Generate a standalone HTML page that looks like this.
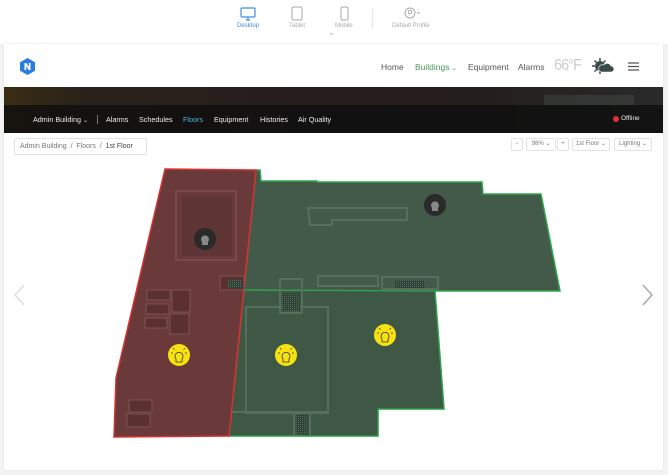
<!DOCTYPE html>
<html><head><meta charset="utf-8">
<style>
*{margin:0;padding:0;box-sizing:border-box}
body{width:668px;height:475px;background:#f3f3f3;font-family:"Liberation Sans",sans-serif;position:relative;overflow:hidden}
.top{position:absolute;top:0;left:0;width:668px;height:44px;background:#fff}
.dev{position:absolute;top:23px;font-size:6px;color:#aaa;text-align:center}
.card{position:absolute;left:4px;top:44px;width:659px;height:426px;background:#fff;box-shadow:0 0 2px #ddd}
.hdr a{position:absolute;top:62px;font-size:8.5px;color:#555}
.banner{position:absolute;left:4px;top:87px;width:659px;height:46px;background:linear-gradient(90deg,#3a2d14 0,#2a221a 12%,#271e1c 40%,#231d1c 70%,#2a2a2a 100%)}
.banner .b2{position:absolute;left:0;top:18px;width:100%;height:28px;background:rgba(15,15,15,.82)}
.nav{position:absolute;top:115px;font-size:7.2px;color:#eee}
.bc{position:absolute;left:14px;top:138px;width:133px;height:17px;border:1px solid #e2e2e2;border-radius:2px;font-size:7px;color:#777;padding:4px 5px;white-space:nowrap}
.ctl{position:absolute;top:138px;height:13px;border:1px solid #e2e2e2;border-radius:2px;font-size:6px;color:#777;text-align:center;line-height:11px}
</style></head><body>
<div class="top">
 <svg style="position:absolute;left:240px;top:7px" width="16" height="14" viewBox="0 0 16 14"><rect x="1" y="1" width="14" height="9" rx="1" fill="none" stroke="#3d8fe0" stroke-width="1.2"/><path d="M6 13h4M8 10v3" stroke="#3d8fe0" stroke-width="1.2"/></svg>
 <div class="dev" style="left:237px;color:#3d8fe0">Desktop</div>
 <svg style="position:absolute;left:291px;top:6px" width="12" height="15"><rect x="1" y="1" width="10" height="13" rx="1.5" fill="none" stroke="#aaa"/></svg>
 <div class="dev" style="left:289px">Tablet</div>
 <svg style="position:absolute;left:340px;top:6px" width="9" height="15"><rect x="1" y="1" width="7" height="13" rx="1.5" fill="none" stroke="#aaa"/></svg>
 <div class="dev" style="left:335px">Mobile</div>
 <div style="position:absolute;left:372px;top:9px;width:1px;height:20px;background:#e5e5e5"></div>
 <svg style="position:absolute;left:404px;top:7px" width="17" height="12"><circle cx="6" cy="6" r="5" fill="none" stroke="#aaa"/><circle cx="6" cy="5" r="1.8" fill="none" stroke="#aaa"/><path d="M13 5l1.5 1.5L16 5" fill="none" stroke="#aaa" stroke-width=".8"/></svg>
 <div class="dev" style="left:392px">Default Profile</div>
 <div style="position:absolute;left:330px;top:33px;font-size:6px;color:#999">^</div>
</div>
<div class="card"></div>
<svg style="position:absolute;left:20px;top:58px" width="15" height="17" viewBox="0 0 15 17"><path d="M7.5 0L15 4.2V12.8L7.5 17 0 12.8V4.2Z" fill="#2a7de1"/><path d="M4.5 12V5h1.8l2.4 4V5h1.8v7H8.7L6.3 8v4z" fill="#fff"/></svg>
<div class="hdr">
 <a style="left:381px">Home</a>
 <a style="left:415px;color:#4a9a5a">Buildings <span style="font-size:6px">&#8964;</span></a>
 <a style="left:468px">Equipment</a>
 <a style="left:518px">Alarms</a>
</div>
<div style="position:absolute;left:554px;top:57px;font-size:16px;color:#ccc;letter-spacing:-1px;transform:scaleX(.9);transform-origin:left">66°F</div>
<svg style="position:absolute;left:592px;top:57px" width="22" height="18" viewBox="0 0 22 18"><circle cx="8" cy="9" r="5" fill="#3b4a4a"/><g stroke="#3b4a4a" stroke-width="1.5"><path d="M8 1v3M8 14v3M0 9h3M13 9h2M2.5 3.5l2 2M2.5 14.5l2-2M13.5 3.5l-2 2"/></g><path d="M9 15h10a3 3 0 0 0 0-6 4 4 0 0 0-7-1 3 3 0 0 0-3 7z" fill="#3b4a4a" stroke="#fff" stroke-width=".6"/></svg>
<svg style="position:absolute;left:628px;top:62px" width="11" height="9"><path d="M0 1h11M0 4.5h11M0 8h11" stroke="#555" stroke-width="1.2"/></svg>
<div class="banner"><div class="b2"></div>
 <div style="position:absolute;left:540px;top:8px;width:90px;height:10px;background:#3a3e3c;opacity:.7"></div>
</div>
<div class="nav" style="left:33px">Admin Building <span style="font-size:6px">&#8964;</span></div>
<div style="position:absolute;left:97px;top:115px;width:1px;height:9px;background:#777"></div>
<div class="nav" style="left:106px">Alarms</div>
<div class="nav" style="left:139px">Schedules</div>
<div class="nav" style="left:183px;color:#5ab0e0">Floors</div>
<div class="nav" style="left:214px">Equipment</div>
<div class="nav" style="left:260px">Histories</div>
<div class="nav" style="left:298px">Air Quality</div>
<div style="position:absolute;left:613px;top:116px;width:6px;height:6px;border-radius:50%;background:#e03030"></div>
<div class="nav" style="left:621px;font-size:6.5px">Offline</div>
<div class="bc">Admin Building &nbsp;/&nbsp; Floors &nbsp;/&nbsp; <span style="color:#444">1st Floor</span></div>
<div class="ctl" style="left:511px;width:12px">−</div>
<div class="ctl" style="left:526px;width:30px">98% ⌄</div>
<div class="ctl" style="left:557px;width:12px">+</div>
<div class="ctl" style="left:572px;width:38px">1st Floor ⌄</div>
<div class="ctl" style="left:614px;width:38px">Lighting ⌄</div>
<svg style="position:absolute;left:13px;top:284px" width="14" height="22"><path d="M11 1L2 11l9 10" fill="none" stroke="#ddd" stroke-width="1.5"/></svg>
<svg style="position:absolute;left:640px;top:284px" width="14" height="22"><path d="M3 1l9 10-9 10" fill="none" stroke="#aaa" stroke-width="1.5"/></svg>

<svg style="position:absolute;left:0;top:0" width="668" height="475">
<defs>
<pattern id="h" width="2" height="2" patternUnits="userSpaceOnUse"><rect width="2" height="2" fill="#2f4236"/><rect width="1" height="1" fill="#5a6a5e"/></pattern>
</defs>
<polygon points="256,170 260,170 261,181 317,181 317,182 482,182 483,194 541,194 560,291 435,291 444,409 378,409 378,436 229,436" fill="#43594a" stroke="#2fa84a" stroke-width="1.5"/>
<polygon points="244,290 435,290 444,409 378,409 378,436 229,436" fill="#3f5745"/>
<polygon points="244,290 435,291 444,409 378,409 378,436 229,436 244,290" fill="none" stroke="#2fa84a" stroke-width="1.3"/>
<polygon points="165,169 256,170 229,436 114,437 116,378" fill="#6a3a3a" stroke="#d83030" stroke-width="1.5"/>
<rect x="176" y="191" width="60" height="69" fill="none" stroke="#7a4a4a" stroke-width="2"/>
<rect x="182" y="196" width="50" height="60" fill="#5e3434"/>
<g fill="#5a3030" stroke="#7e5252">
<rect x="147" y="290" width="23" height="10"/><rect x="146" y="304" width="23" height="10"/><rect x="145" y="318" width="22" height="10"/>
<rect x="172" y="290" width="18" height="22"/><rect x="170" y="314" width="19" height="20"/>
<rect x="129" y="400" width="23" height="12"/><rect x="127" y="414" width="23" height="13"/>
<rect x="220" y="276" width="24" height="14"/>
</g>
<g fill="none" stroke="#566e5c" stroke-width="2">
<path d="M310 225h22v-5h75v-12h-99z"/>
<rect x="246" y="307" width="82" height="106"/>
<rect x="318" y="276" width="60" height="10"/>
<rect x="382" y="277" width="56" height="12"/>
<rect x="280" y="279" width="22" height="34"/>
<path d="M232 412h95M294 412v24M310 412v24"/>
</g>
<g fill="url(#h)"><rect x="282" y="293" width="18" height="18"/><rect x="296" y="414" width="12" height="20"/><rect x="395" y="280" width="30" height="8"/><rect x="228" y="280" width="14" height="8"/></g>
<circle cx="205" cy="239" r="11" fill="#2a2a2a"/><path d="M202 242a4 4 0 1 1 6 0v3h-6z" fill="#888"/>
<circle cx="435" cy="205" r="11" fill="#2a2a2a"/><path d="M432 208a4 4 0 1 1 6 0v3h-6z" fill="#888"/>
<g fill="#f7e20f"><circle cx="179" cy="355" r="11"/><circle cx="286" cy="355" r="11"/><circle cx="385" cy="335" r="11"/></g>
<g fill="none" stroke="#333" stroke-width=".8">
<path d="M176 359a4 4 0 1 1 6 0v3h-6zM171 353h2M185 353h2M173 348l1.5 1.5M185 348l-1.5 1.5"/>
<path d="M283 359a4 4 0 1 1 6 0v3h-6zM278 353h2M292 353h2M280 348l1.5 1.5M292 348l-1.5 1.5"/>
<path d="M382 339a4 4 0 1 1 6 0v3h-6zM377 333h2M391 333h2M379 328l1.5 1.5M391 328l-1.5 1.5"/>
</g>
</svg>
</body></html>
